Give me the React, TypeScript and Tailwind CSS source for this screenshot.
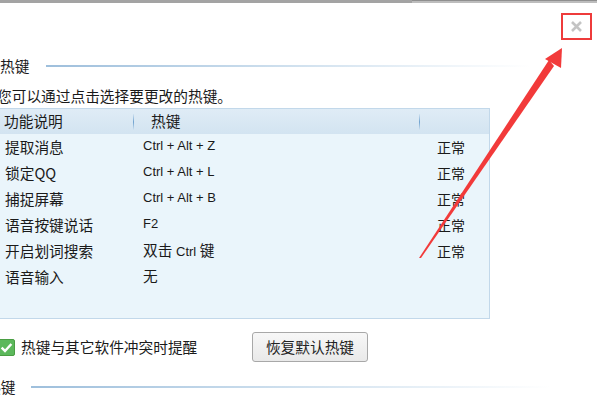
import React from "react";

const cjk = { fontFamily: '"Microsoft YaHei","Noto Sans CJK SC","Noto Sans",sans-serif' };
const latin = { fontFamily: '"Liberation Sans","Noto Sans CJK SC",sans-serif' };

const rows: [string, string, string][] = [
  ["提取消息", "Ctrl + Alt + Z", "正常"],
  ["锁定QQ", "Ctrl + Alt + L", "正常"],
  ["捕捉屏幕", "Ctrl + Alt + B", "正常"],
  ["语音按键说话", "F2", "正常"],
  ["开启划词搜索", "双击 Ctrl 键", "正常"],
  ["语音输入", "无", ""],
];

export default function App() {
  return (
    <div className="relative w-[597px] h-[396px] overflow-hidden bg-white text-[#1a1a1a]" style={cjk}>
      {/* top bar */}
      <div className="flex h-[3px]">
        <div className="w-[412px] bg-[#a3a3a3]" />
        <div className="flex-1 bg-[#bdbdbd] border-t border-[#8f8f8f]" />
      </div>

      {/* heading */}
      <div className="mt-[55px] flex items-center h-[16px]">
        <span className="text-[14.7px] leading-[16px] w-[46px] shrink-0">热键</span>
        <div className="h-[2px] w-[485px] bg-gradient-to-r from-[#9ebfdc] via-[#cfe0ee] to-white" />
      </div>

      <div className="mt-[13px] ml-[-3px] text-[14.7px] leading-[18px] h-[18px] whitespace-nowrap">您可以通过点击选择要更改的热键。</div>

      {/* table */}
      <div className="mt-[3px] w-[491px] ml-[-1px] h-[211px] border border-[#c2d8ea] bg-[#eaf5fb] flex flex-col">
        <div className="h-[25px] flex items-center bg-gradient-to-b from-[#dfecf6] to-[#d3e4f1] text-[14.7px] shrink-0">
          <div className="w-[134px] pl-[4px] flex items-center justify-between h-full">
            <span>功能说明</span>
            <div className="w-[1px] h-[16px] bg-gradient-to-b from-[#d3e4f1] via-[#6fa2cf] to-[#d3e4f1]" />
          </div>
          <div className="w-[286px] pl-[17px] flex items-center justify-between h-full">
            <span>热键</span>
            <div className="w-[1px] h-[16px] bg-gradient-to-b from-[#d3e4f1] via-[#6fa2cf] to-[#d3e4f1]" />
          </div>
        </div>
        {rows.map(([a, b, c]) => (
          <div key={a} className="h-[26px] flex items-center text-[14.7px]">
            <div className="w-[143px] pl-[5px]">{a}</div>
            <div className="w-[294px] text-[13px] -mt-[2px]" style={latin}>
              {b.includes("双击") ? (
                <span>
                  <span className="text-[14.7px]" style={cjk}>双击</span> Ctrl <span className="text-[14.7px]" style={cjk}>键</span>
                </span>
              ) : b === "无" ? (
                <span className="text-[14.7px]" style={cjk}>无</span>
              ) : (
                b
              )}
            </div>
            <div className="text-[14px]" style={{ fontFamily: '"Noto Sans CJK SC",sans-serif' }}>{c}</div>
          </div>
        ))}
      </div>

      {/* checkbox + button */}
      <div className="mt-[13px] flex items-center h-[30px]">
        <div className="ml-[-2px] w-[17px] h-[17px] rounded-[2px] bg-[#5cb85c] border border-[#4a9e43] flex items-center justify-center">
          <svg width="13" height="13" viewBox="0 0 12 12">
            <path d="M1.5 6.2 L4.6 9.2 L10.5 2.8" stroke="white" strokeWidth="2.2" fill="none" />
          </svg>
        </div>
        <span className="ml-[6px] text-[14.7px] w-[231px] whitespace-nowrap">热键与其它软件冲突时提醒</span>
        <button className="w-[116px] h-[30px] rounded-[3px] border border-[#a8a8a8] bg-gradient-to-b from-[#f7f7f7] to-[#e9e9e9] text-[14.7px] text-[#222]" style={cjk}>
          恢复默认热键
        </button>
      </div>

      {/* bottom heading */}
      <div className="mt-[17px] flex items-center h-[16px] ml-[-14px]">
        <span className="text-[14.7px] leading-[16px] w-[45px] shrink-0">热键</span>
        <div className="h-[2px] w-[520px] bg-gradient-to-r from-[#9ebfdc] via-[#cfe0ee] to-white" />
      </div>

      {/* close box */}
      <div className="absolute left-[561px] top-[13px] w-[31px] h-[27px] border-2 border-[#ee3b3b] flex items-center justify-center">
        <svg width="13" height="13" viewBox="0 0 13 13">
          <path d="M2 2 L11 11 M11 2 L2 11" stroke="#c4c4c4" strokeWidth="2.6" />
        </svg>
      </div>

      {/* arrow */}
      <svg className="absolute left-0 top-0 pointer-events-none" width="597" height="396">
        <polygon points="419,258 421,258 554,66 549,60" fill="#f23a3a" />
        <polygon points="562,48 545,59 561,68" fill="#f23a3a" />
      </svg>
    </div>
  );
}
